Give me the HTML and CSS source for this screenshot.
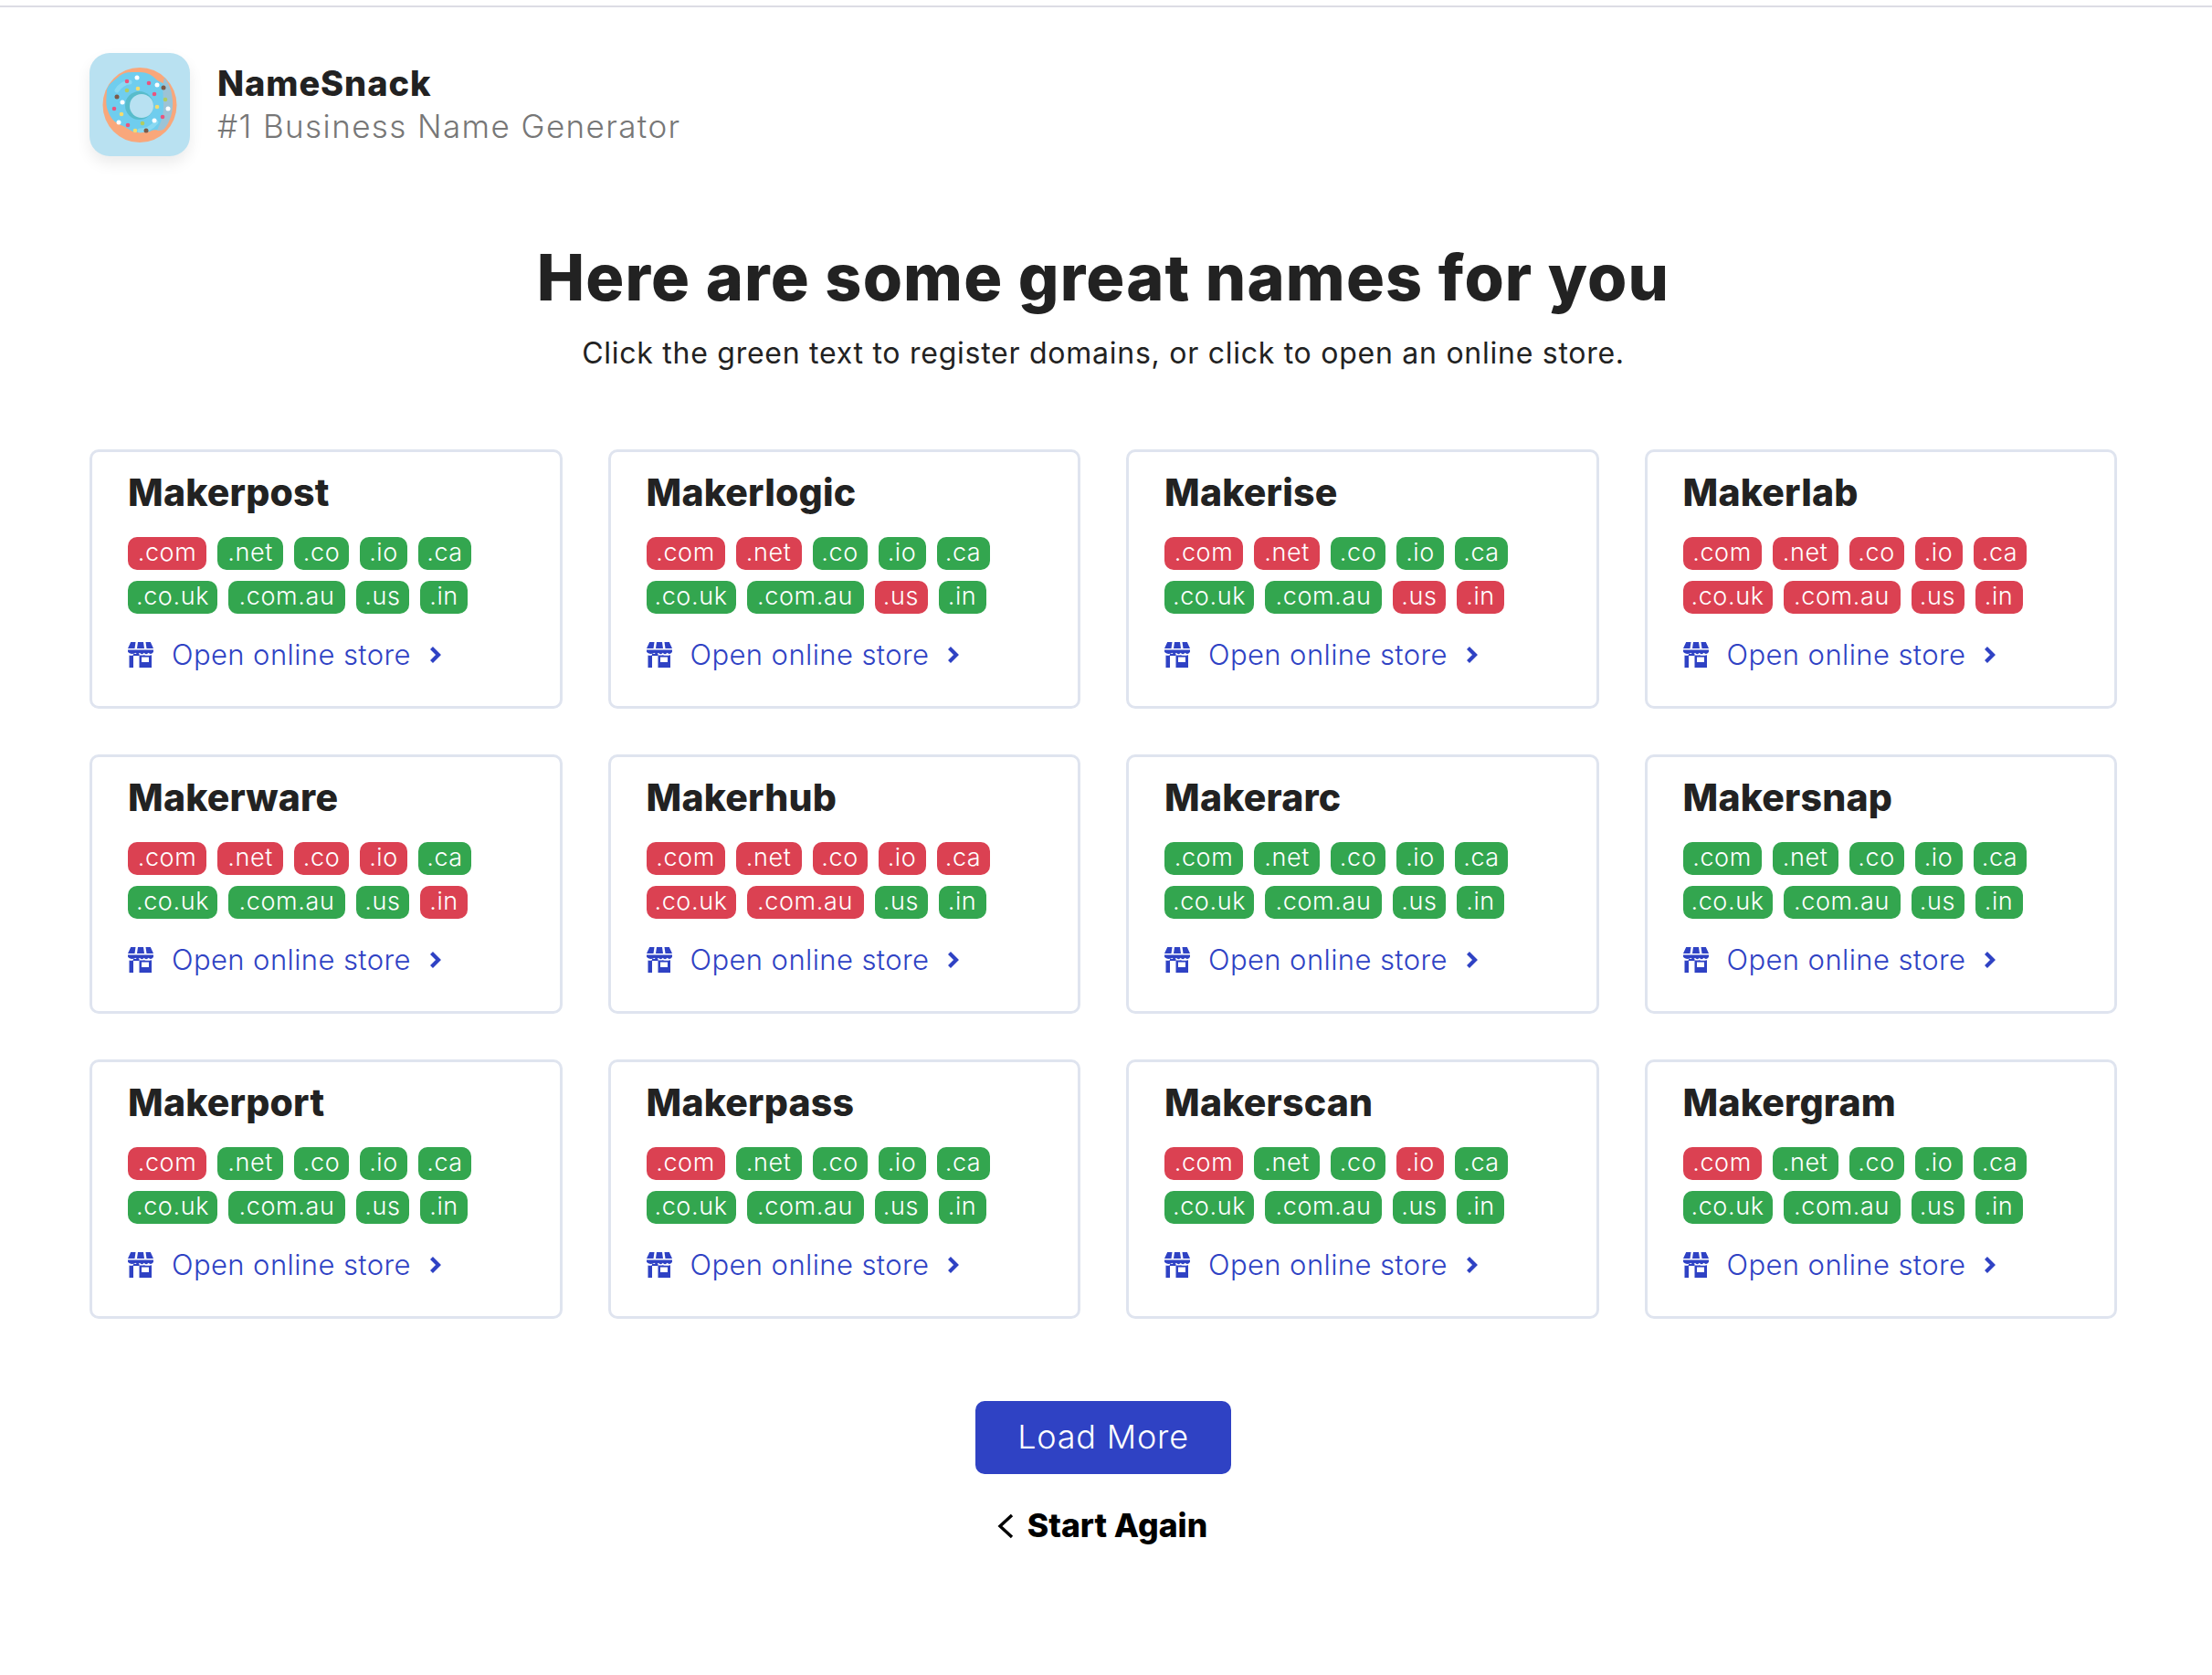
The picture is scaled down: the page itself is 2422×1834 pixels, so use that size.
FILE: index.html
```html
<!DOCTYPE html>
<html lang="en">
<head>
<meta charset="utf-8">
<title>NameSnack</title>
<link rel="stylesheet" href="styles.css">
</head>
<body>
<svg class="defs" width="0" height="0" aria-hidden="true">
  <symbol id="store" viewBox="0 0 28 28">
    <path d="M3.200 0h5.300l-1 7H0zM11 0h6l1 7H10zM19.500 0h5.300L28 7h-7.500z"/>
    <path d="M0 8.500h28v2c-.8 2.600-4 3.200-5.400 1.300-1.300 1.900-3.800 1.900-4.800 0-1.200 1.900-3.600 1.900-4.800 0-1.200 1.900-3.500 1.900-4.800 0C6.800 13.700 1 13.300 0 10.500z"/>
    <path fill-rule="evenodd" d="M1.500 14.500c1.600.5 3.200.4 4.500-.3V28H1.500zM12.500 14.200c1.500.5 3.500.5 5.300 0 2 .7 5 .7 8.200 0V28H12.500zM15 16.500v5.500h8v-5.500z"/>
    <path d="M6 13h6.500v2H6z"/>
  </symbol>
  <symbol id="chev" viewBox="0 0 14 20">
    <path d="M2.500 2.500l7.500 7.500-7.500 7.500" fill="none" stroke="currentColor" stroke-width="4.200"/>
  </symbol>
</svg>
<header class="brand">
  <div class="logo">
    <svg viewBox="0 0 110 112" width="110" height="112">
      <ellipse cx="55" cy="57" rx="40.500" ry="41" fill="#f9a77b"/>
      <path d="M55 21c8 0 13 3 17 7 5 5 12 4 14 13 1 6 5 12 3 20-1 9-5 14-9 20-4 5-8 2-12 4-5 3-11 1-16 2-6 0-10-5-15-7-9-3-14-8-17-17-3-8-1-16-1-23 3-8 9-10 14-15 6-5 14-4 22-4z" fill="#6fcdee"/>
      <path d="M82 27c4 5 8 12 9 25 1 12-3 24-9 31-3 2-5 2-8 2 3-8 7-12 7-28 0-11-2-21 1-30z" fill="#9cc3d6"/>
      <path d="M30 41c3-5 9-9 14-9" fill="none" stroke="#8ad9f2" stroke-width="5" stroke-linecap="round"/>
      <path d="M55 85c6 0 13-3 18-9" fill="none" stroke="#8ad9f2" stroke-width="5" stroke-linecap="round"/>
      <circle cx="54.500" cy="57.500" r="15.500" fill="#58bccb"/>
      <circle cx="57" cy="58" r="13" fill="#b8e1f2"/>
      <g fill="#e8557f">
        <circle cx="41" cy="31" r="2.300"/><circle cx="65" cy="33" r="2.300"/><circle cx="71" cy="45" r="2.300"/><circle cx="27" cy="61" r="2.300"/><circle cx="42" cy="79" r="2.300"/><circle cx="80" cy="70" r="2.300"/>
      </g>
      <g fill="#fff">
        <circle cx="52" cy="27" r="2.500"/><circle cx="74" cy="35" r="2.500"/><circle cx="36" cy="54" r="2.500"/><circle cx="86" cy="61" r="2.500"/><circle cx="32" cy="76" r="2.500"/><circle cx="71" cy="74" r="2.500"/>
      </g>
      <g fill="#f3dc6e">
        <circle cx="53" cy="39" r="2.300"/><circle cx="74" cy="59" r="2.300"/><circle cx="35" cy="67" r="2.300"/><circle cx="50" cy="85" r="2.300"/>
      </g>
      <g fill="#b0cc62">
        <circle cx="41" cy="41" r="2.300"/><circle cx="83" cy="51" r="2.300"/><circle cx="58" cy="77" r="2.300"/>
      </g>
      <g fill="#7d5a48">
        <circle cx="81" cy="38" r="2.500"/><circle cx="30" cy="48" r="2.500"/><circle cx="62" cy="85" r="2.500"/>
      </g>
    </svg>
  </div>
  <div class="brand-text">
    <div class="brand-name">NameSnack</div>
    <div class="brand-tag">#1 Business Name Generator</div>
  </div>
</header>
<main class="main">
  <h1 class="title">Here are some great names for you</h1>
  <p class="lead">Click the green text to register domains, or click to open an online store.</p>
  <section class="grid">

    <article class="card">
      <h2 class="name">Makerpost</h2>
      <div class="tlds">
        <div class="tld-row"><a class="tld w-com no">.com</a><a class="tld w-net">.net</a><a class="tld w-co">.co</a><a class="tld w-io">.io</a><a class="tld w-ca">.ca</a></div>
        <div class="tld-row"><a class="tld w-couk">.co.uk</a><a class="tld w-comau">.com.au</a><a class="tld w-us">.us</a><a class="tld w-in">.in</a></div>
      </div>
      <a class="store"><svg class="store-icon"><use href="#store"/></svg><span>Open online store</span><svg class="chev"><use href="#chev"/></svg></a>
    </article>

    <article class="card">
      <h2 class="name">Makerlogic</h2>
      <div class="tlds">
        <div class="tld-row"><a class="tld w-com no">.com</a><a class="tld w-net no">.net</a><a class="tld w-co">.co</a><a class="tld w-io">.io</a><a class="tld w-ca">.ca</a></div>
        <div class="tld-row"><a class="tld w-couk">.co.uk</a><a class="tld w-comau">.com.au</a><a class="tld w-us no">.us</a><a class="tld w-in">.in</a></div>
      </div>
      <a class="store"><svg class="store-icon"><use href="#store"/></svg><span>Open online store</span><svg class="chev"><use href="#chev"/></svg></a>
    </article>

    <article class="card">
      <h2 class="name">Makerise</h2>
      <div class="tlds">
        <div class="tld-row"><a class="tld w-com no">.com</a><a class="tld w-net no">.net</a><a class="tld w-co">.co</a><a class="tld w-io">.io</a><a class="tld w-ca">.ca</a></div>
        <div class="tld-row"><a class="tld w-couk">.co.uk</a><a class="tld w-comau">.com.au</a><a class="tld w-us no">.us</a><a class="tld w-in no">.in</a></div>
      </div>
      <a class="store"><svg class="store-icon"><use href="#store"/></svg><span>Open online store</span><svg class="chev"><use href="#chev"/></svg></a>
    </article>

    <article class="card">
      <h2 class="name">Makerlab</h2>
      <div class="tlds">
        <div class="tld-row"><a class="tld w-com no">.com</a><a class="tld w-net no">.net</a><a class="tld w-co no">.co</a><a class="tld w-io no">.io</a><a class="tld w-ca no">.ca</a></div>
        <div class="tld-row"><a class="tld w-couk no">.co.uk</a><a class="tld w-comau no">.com.au</a><a class="tld w-us no">.us</a><a class="tld w-in no">.in</a></div>
      </div>
      <a class="store"><svg class="store-icon"><use href="#store"/></svg><span>Open online store</span><svg class="chev"><use href="#chev"/></svg></a>
    </article>

    <article class="card">
      <h2 class="name">Makerware</h2>
      <div class="tlds">
        <div class="tld-row"><a class="tld w-com no">.com</a><a class="tld w-net no">.net</a><a class="tld w-co no">.co</a><a class="tld w-io no">.io</a><a class="tld w-ca">.ca</a></div>
        <div class="tld-row"><a class="tld w-couk">.co.uk</a><a class="tld w-comau">.com.au</a><a class="tld w-us">.us</a><a class="tld w-in no">.in</a></div>
      </div>
      <a class="store"><svg class="store-icon"><use href="#store"/></svg><span>Open online store</span><svg class="chev"><use href="#chev"/></svg></a>
    </article>

    <article class="card">
      <h2 class="name">Makerhub</h2>
      <div class="tlds">
        <div class="tld-row"><a class="tld w-com no">.com</a><a class="tld w-net no">.net</a><a class="tld w-co no">.co</a><a class="tld w-io no">.io</a><a class="tld w-ca no">.ca</a></div>
        <div class="tld-row"><a class="tld w-couk no">.co.uk</a><a class="tld w-comau no">.com.au</a><a class="tld w-us">.us</a><a class="tld w-in">.in</a></div>
      </div>
      <a class="store"><svg class="store-icon"><use href="#store"/></svg><span>Open online store</span><svg class="chev"><use href="#chev"/></svg></a>
    </article>

    <article class="card">
      <h2 class="name">Makerarc</h2>
      <div class="tlds">
        <div class="tld-row"><a class="tld w-com">.com</a><a class="tld w-net">.net</a><a class="tld w-co">.co</a><a class="tld w-io">.io</a><a class="tld w-ca">.ca</a></div>
        <div class="tld-row"><a class="tld w-couk">.co.uk</a><a class="tld w-comau">.com.au</a><a class="tld w-us">.us</a><a class="tld w-in">.in</a></div>
      </div>
      <a class="store"><svg class="store-icon"><use href="#store"/></svg><span>Open online store</span><svg class="chev"><use href="#chev"/></svg></a>
    </article>

    <article class="card">
      <h2 class="name">Makersnap</h2>
      <div class="tlds">
        <div class="tld-row"><a class="tld w-com">.com</a><a class="tld w-net">.net</a><a class="tld w-co">.co</a><a class="tld w-io">.io</a><a class="tld w-ca">.ca</a></div>
        <div class="tld-row"><a class="tld w-couk">.co.uk</a><a class="tld w-comau">.com.au</a><a class="tld w-us">.us</a><a class="tld w-in">.in</a></div>
      </div>
      <a class="store"><svg class="store-icon"><use href="#store"/></svg><span>Open online store</span><svg class="chev"><use href="#chev"/></svg></a>
    </article>

    <article class="card">
      <h2 class="name">Makerport</h2>
      <div class="tlds">
        <div class="tld-row"><a class="tld w-com no">.com</a><a class="tld w-net">.net</a><a class="tld w-co">.co</a><a class="tld w-io">.io</a><a class="tld w-ca">.ca</a></div>
        <div class="tld-row"><a class="tld w-couk">.co.uk</a><a class="tld w-comau">.com.au</a><a class="tld w-us">.us</a><a class="tld w-in">.in</a></div>
      </div>
      <a class="store"><svg class="store-icon"><use href="#store"/></svg><span>Open online store</span><svg class="chev"><use href="#chev"/></svg></a>
    </article>

    <article class="card">
      <h2 class="name">Makerpass</h2>
      <div class="tlds">
        <div class="tld-row"><a class="tld w-com no">.com</a><a class="tld w-net">.net</a><a class="tld w-co">.co</a><a class="tld w-io">.io</a><a class="tld w-ca">.ca</a></div>
        <div class="tld-row"><a class="tld w-couk">.co.uk</a><a class="tld w-comau">.com.au</a><a class="tld w-us">.us</a><a class="tld w-in">.in</a></div>
      </div>
      <a class="store"><svg class="store-icon"><use href="#store"/></svg><span>Open online store</span><svg class="chev"><use href="#chev"/></svg></a>
    </article>

    <article class="card">
      <h2 class="name">Makerscan</h2>
      <div class="tlds">
        <div class="tld-row"><a class="tld w-com no">.com</a><a class="tld w-net">.net</a><a class="tld w-co">.co</a><a class="tld w-io no">.io</a><a class="tld w-ca">.ca</a></div>
        <div class="tld-row"><a class="tld w-couk">.co.uk</a><a class="tld w-comau">.com.au</a><a class="tld w-us">.us</a><a class="tld w-in">.in</a></div>
      </div>
      <a class="store"><svg class="store-icon"><use href="#store"/></svg><span>Open online store</span><svg class="chev"><use href="#chev"/></svg></a>
    </article>

    <article class="card">
      <h2 class="name">Makergram</h2>
      <div class="tlds">
        <div class="tld-row"><a class="tld w-com no">.com</a><a class="tld w-net">.net</a><a class="tld w-co">.co</a><a class="tld w-io">.io</a><a class="tld w-ca">.ca</a></div>
        <div class="tld-row"><a class="tld w-couk">.co.uk</a><a class="tld w-comau">.com.au</a><a class="tld w-us">.us</a><a class="tld w-in">.in</a></div>
      </div>
      <a class="store"><svg class="store-icon"><use href="#store"/></svg><span>Open online store</span><svg class="chev"><use href="#chev"/></svg></a>
    </article>

  </section>
  <div class="actions">
    <button class="load">Load More</button>
    <a class="again">
      <svg class="back" viewBox="0 0 20 28" width="20" height="28"><path d="M17 2L4 14l13 12" fill="none" stroke="#000" stroke-width="3.400"/></svg>
      <span>Start Again</span>
    </a>
  </div>
</main>
</body>
</html>
```
FILE: styles.css
```css
* { box-sizing: border-box; }
html, body { margin: 0; background: #fff; }
body {
  min-height: 1828px;
  border-top: 2px solid #dcdce4;
  margin-top: 6px;
  font-family: Inter, "Liberation Sans", sans-serif;
  color: #222;
}
.defs { position: absolute; }
.brand {
  display: flex;
  align-items: center;
  gap: 30px;
  padding: 50px 0 0 98px;
}
.logo {
  width: 110px;
  height: 113px;
  border-radius: 22px;
  background: #b9e1f1;
  box-shadow: 0 8px 16px rgba(0, 0, 0, .08);
  overflow: hidden;
}
.logo svg { display: block; }
.brand-name {
  font-size: 38px;
  font-weight: 800;
  line-height: 46px;
  letter-spacing: .9px;
  color: #222;
}
.brand-tag {
  font-size: 35px;
  font-weight: 300;
  line-height: 48px;
  color: #777;
  letter-spacing: 1.4px;
}
.main { padding: 0 104px 0 98px; }
.title {
  margin: 91px 0 0;
  text-align: center;
  font-size: 70px;
  line-height: 84px;
  font-weight: 800;
  letter-spacing: 1.15px;
  color: #222;
}
.lead {
  margin: 19px 0 0;
  text-align: center;
  font-size: 32px;
  line-height: 44px;
  font-weight: 400;
  letter-spacing: .74px;
  color: #222;
}
.grid {
  display: grid;
  grid-template-columns: repeat(4, 1fr);
  gap: 50px;
  margin-top: 83px;
}
.card {
  height: 284px;
  border: 3px solid #dfe4ef;
  border-radius: 10px;
  padding: 19px 0 0 39px;
}
.name {
  margin: 0;
  font-size: 41px;
  line-height: 50px;
  font-weight: 800;
  letter-spacing: .2px;
  color: #222;
}
.tlds {
  display: flex;
  flex-direction: column;
  gap: 12px;
  margin-top: 24px;
}
.tld-row { display: flex; gap: 12px; }
.tld {
  height: 36px;
  border-radius: 10px;
  background: #33a64f;
  color: #fff;
  font-size: 27px;
  font-weight: 350;
  line-height: 34px;
  letter-spacing: .6px;
  text-align: center;
}
.tld.no { background: #db4152; }
.w-com { width: 86px; }
.w-net { width: 72px; }
.w-co { width: 60px; }
.w-io { width: 52px; }
.w-ca { width: 58px; }
.w-couk { width: 98px; }
.w-comau { width: 128px; }
.w-us { width: 58px; }
.w-in { width: 52px; }
.store {
  display: flex;
  align-items: center;
  gap: 20px;
  margin-top: 25px;
  color: #2f42c4;
  font-size: 31px;
  font-weight: 350;
  line-height: 40px;
  letter-spacing: .4px;
  fill: currentColor;
}
.store-icon { width: 28px; height: 28px; flex: none; }
.chev { width: 14px; height: 20px; flex: none; }
.actions {
  display: flex;
  flex-direction: column;
  align-items: center;
  margin-top: 90px;
}
.load {
  width: 280px;
  height: 80px;
  border: 0;
  border-radius: 10px;
  padding: 0 0 3px;
  background: #2f42c4;
  color: #fff;
  font: 300 36px Inter, sans-serif;
  letter-spacing: .8px;
}
.again {
  display: flex;
  align-items: center;
  gap: 14px;
  margin: 35px 3px 0 0;
  font-size: 35.500px;
  line-height: 44px;
  font-weight: 800;
  color: #000;
}
```
